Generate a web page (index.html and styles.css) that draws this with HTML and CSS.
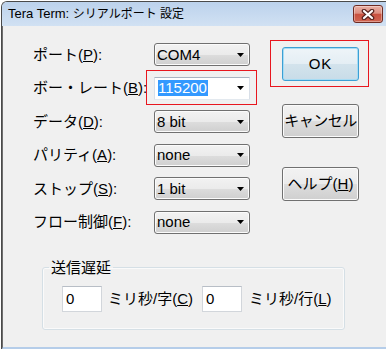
FILE: index.html
```html
<!DOCTYPE html>
<html lang="ja">
<head>
<meta charset="utf-8">
<title>Tera Term: シリアルポート 設定</title>
<link rel="stylesheet" href="styles.css">
</head>
<body>
<div class="window">
  <div class="titlebar">
    <span class="title">Tera Term: <span class="title-jp">シリアルポート 設定</span></span>
    <div class="close">
      <svg width="14" height="11" viewBox="0 0 14 11">
        <path d="M3 2 L11 9 M11 2 L3 9" stroke="#5a2621" stroke-width="4.6" stroke-linecap="round" fill="none"/>
        <path d="M3 2 L11 9 M11 2 L3 9" stroke="#ffffff" stroke-width="2.2" stroke-linecap="round" fill="none"/>
      </svg>
    </div>
  </div>
  <div class="client">
    <div class="top">
      <div class="fields">
        <span class="lbl">ポート(<u>P</u>):</span>
        <div class="combo"><span class="val">COM4</span><svg class="arrow" width="7" height="4" viewBox="0 0 7 4"><polygon points="0,0 7,0 3.5,4" fill="#000"/></svg></div>

        <span class="lbl">ボー・レート(<u>B</u>):</span>
        <div class="combo-cell">
          <div class="combo combo-edit"><span class="sel">115200</span><svg class="arrow" width="7" height="4" viewBox="0 0 7 4"><polygon points="0,0 7,0 3.5,4" fill="#000"/></svg></div>
          <div class="mark mark-combo"></div>
        </div>

        <span class="lbl">データ(<u>D</u>):</span>
        <div class="combo"><span class="val">8 bit</span><svg class="arrow" width="7" height="4" viewBox="0 0 7 4"><polygon points="0,0 7,0 3.5,4" fill="#000"/></svg></div>

        <span class="lbl">パリティ(<u>A</u>):</span>
        <div class="combo"><span class="val">none</span><svg class="arrow" width="7" height="4" viewBox="0 0 7 4"><polygon points="0,0 7,0 3.5,4" fill="#000"/></svg></div>

        <span class="lbl">ストップ(<u>S</u>):</span>
        <div class="combo"><span class="val">1 bit</span><svg class="arrow" width="7" height="4" viewBox="0 0 7 4"><polygon points="0,0 7,0 3.5,4" fill="#000"/></svg></div>

        <span class="lbl">フロー制御(<u>F</u>):</span>
        <div class="combo"><span class="val">none</span><svg class="arrow" width="7" height="4" viewBox="0 0 7 4"><polygon points="0,0 7,0 3.5,4" fill="#000"/></svg></div>
      </div>
      <div class="buttons">
        <div class="btn btn-ok">OK<span class="mark mark-ok"></span></div>
        <div class="btn btn-cancel">キャンセル</div>
        <div class="btn btn-help">ヘルプ(<u>H</u>)</div>
      </div>
    </div>
    <fieldset class="group">
      <legend class="group-title">送信遅延</legend>
      <div class="delay-row">
        <div class="edit">0</div>
        <span class="unit">ミリ秒/字(<u>C</u>)</span>
        <div class="edit edit-2">0</div>
        <span class="unit unit-2">ミリ秒/行(<u>L</u>)</span>
      </div>
    </fieldset>
  </div>
</div>
</body>
</html>
```
FILE: styles.css
```css
* { box-sizing: border-box; }
html, body { margin: 0; padding: 0; }
body {
  width: 386px;
  height: 349px;
  overflow: hidden;
  background: #ffffff;
  font-family: "Liberation Sans", "Noto Sans CJK JP", sans-serif;
  color: #000;
}
.window {
  margin: 1px 0 0 1px;
  width: 385px;
  height: 348px;
  border-left: 1px solid #4a4a4a;
  border-top: 1px solid #4a4a4a;
  border-top-left-radius: 6px;
  overflow: hidden;
  display: flex;
  flex-direction: column;
  background: #f0f0f0;
}
.titlebar {
  height: 24px;
  flex: none;
  display: flex;
  align-items: center;
  justify-content: space-between;
  padding: 0 3px 0 6px;
  background: linear-gradient(#bcd2ec, #d1e1f3);
}
.title {
  font-size: 13px;
  line-height: 16px;
  white-space: nowrap;
}
.title-jp { font-size: 12px; }
.close {
  width: 30px;
  height: 18px;
  border: 1px solid #6e2a22;
  border-radius: 3px;
  background: linear-gradient(#eab0a5 0%, #dc8e80 45%, #c9513f 52%, #d06552 100%);
  box-shadow: inset 0 0 0 1px rgba(255, 255, 255, 0.35);
  display: flex;
  align-items: center;
  justify-content: center;
}
.close svg { display: block; }
.client {
  flex: 1;
  border-left: 1px solid #6e6e6e;
  border-bottom: 2px solid #b5cde9;
  padding-top: 17px;
  display: flex;
  flex-direction: column;
}
.top { display: flex; }
.fields {
  padding-left: 30px;
  display: grid;
  grid-template-columns: 121px 96px;
  grid-auto-rows: 23px;
  row-gap: 10.6px;
  align-items: center;
}
.lbl {
  font-size: 15px;
  line-height: 18px;
  white-space: nowrap;
}
.combo {
  height: 23px;
  border: 1px solid #707070;
  border-radius: 3px;
  background: linear-gradient(#f2f2f2 0%, #ebebeb 50%, #dddddd 51%, #cfcfcf 100%);
  box-shadow: inset 0 0 0 1px #fbfbfb;
  display: flex;
  align-items: center;
  justify-content: space-between;
  padding: 0 5px 0 2px;
  font-size: 15px;
  line-height: 18px;
}
.arrow { display: block; flex: none; }
.combo-cell {
  position: relative;
  height: 23px;
}
.combo-edit {
  background: #ffffff;
  box-shadow: none;
  border-radius: 1px;
  border-color: #a9b4c2 #d8dfe8 #e3e9ef #d8dfe8;
  padding-left: 3px;
}
.sel {
  background: #3399ff;
  color: #ffffff;
  line-height: 16px;
  padding: 0 1px 0 0;
}
.mark {
  position: absolute;
  border: 1px solid red;
  border-color: #e8161e;
}
.mark-combo {
  top: -7px;
  left: -8px;
  right: -7px;
  bottom: -5px;
}
.buttons {
  margin-left: 32px;
  padding-top: 4px;
  display: flex;
  flex-direction: column;
}
.btn {
  width: 77px;
  height: 34px;
  border: 1px solid #707070;
  border-radius: 3px;
  background: linear-gradient(#f2f2f2 0%, #ebebeb 50%, #dddddd 51%, #cfcfcf 100%);
  box-shadow: inset 0 0 0 1px #fbfbfb;
  display: flex;
  align-items: center;
  justify-content: center;
  font-size: 15px;
  line-height: 18px;
  white-space: nowrap;
}
.btn-ok {
  position: relative;
  border-color: #3c9fd4;
  background: linear-gradient(#eef4f8 0%, #e4eef4 50%, #d3e3ec 51%, #c8dce8 100%);
  box-shadow: inset 0 0 0 1px #a6dcf4;
  letter-spacing: 1px;
}
.mark-ok {
  top: -8px;
  left: -13px;
  right: -11px;
  bottom: -7px;
}
.btn-cancel { margin-top: 23px; letter-spacing: -0.5px; }
.btn-help { margin-top: 29px; }
.group {
  margin: 25px 0 0 39px;
  width: 303px;
  height: 71px;
  border: 1px solid #d5dfe5;
  border-radius: 3px;
  box-shadow: inset 0 0 0 1px #fafafa;
  padding: 10px 0 0 6px;
  min-inline-size: 0;
}
.group-title {
  font-size: 15px;
  line-height: 17px;
  padding: 0 2px;
}
.delay-row {
  display: flex;
  align-items: center;
  padding-left: 13px;
}
.edit {
  width: 40px;
  height: 26px;
  background: #ffffff;
  border: 1px solid #d2d6db;
  border-top-color: #b8bec6;
  font-size: 15px;
  line-height: 24px;
  padding-left: 3px;
}
.unit {
  margin-left: 6px;
  font-size: 15px;
  line-height: 18px;
  white-space: nowrap;
}
.edit-2 { margin-left: 9px; }
.unit-2 { margin-left: 7px; }
```
